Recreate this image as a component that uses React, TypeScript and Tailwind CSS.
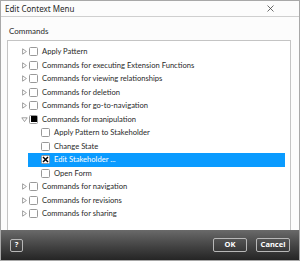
import React from 'react';

type Row = { label: string; level: 0 | 1; state?: 'collapsed' | 'expanded'; check?: 'none' | 'mixed' | 'x'; selected?: boolean };

const rows: Row[] = [
  { label: 'Apply Pattern', level: 0, state: 'collapsed' },
  { label: 'Commands for executing Extension Functions', level: 0, state: 'collapsed' },
  { label: 'Commands for viewing relationships', level: 0, state: 'collapsed' },
  { label: 'Commands for deletion', level: 0, state: 'collapsed' },
  { label: 'Commands for go-to-navigation', level: 0, state: 'collapsed' },
  { label: 'Commands for manipulation', level: 0, state: 'expanded', check: 'mixed' },
  { label: 'Apply Pattern to Stakeholder', level: 1 },
  { label: 'Change State', level: 1 },
  { label: 'Edit Stakeholder ...', level: 1, check: 'x', selected: true },
  { label: 'Open Form', level: 1 },
  { label: 'Commands for navigation', level: 0, state: 'collapsed' },
  { label: 'Commands for revisions', level: 0, state: 'collapsed' },
  { label: 'Commands for sharing', level: 0, state: 'collapsed' },
];

function Arrow({ state }: { state?: 'collapsed' | 'expanded' }) {
  if (!state) return <span className="w-[7px]" />;
  return (
    <svg width="7" height="7" viewBox="0 0 7 7" className="shrink-0">
      {state === 'collapsed' ? (
        <path d="M1.6 0.8 L5.4 3.5 L1.6 6.2 Z" fill="none" stroke="#808080" strokeWidth="0.75" />
      ) : (
        <path d="M0.8 1.8 L6.2 1.8 L3.5 5.6 Z" fill="none" stroke="#808080" strokeWidth="0.75" />
      )}
    </svg>
  );
}

function Check({ check }: { check?: 'none' | 'mixed' | 'x' }) {
  return (
    <span className="w-[9px] h-[9px] shrink-0 rounded-[1.5px] border border-[#999] bg-white flex items-center justify-center">
      {check === 'mixed' && <span className="w-[6px] h-[6px] bg-black" />}
      {check === 'x' && (
        <svg width="7" height="7" viewBox="0 0 7 7">
          <path d="M1 1 L6 6 M6 1 L1 6" stroke="#000" strokeWidth="1.5" />
        </svg>
      )}
    </span>
  );
}

export default function App() {
  return (
    <div className="w-[300px] h-[261px] bg-[#fcfcfc] border border-[#a8a8a8] flex flex-col overflow-hidden text-[#2a2a2a]" style={{ fontFamily: 'Lato, "Noto Sans", sans-serif' }}>
      {/* title bar */}
      <div className="h-[16px] shrink-0 border-b border-[#cfcfcf] flex items-center justify-between pl-[4px] pr-[25px] text-[8px]" style={{ fontFamily: '"Noto Sans", sans-serif' }}>
        <span>Edit Context Menu</span>
        <svg width="7" height="7" viewBox="0 0 7 7">
          <path d="M0.5 0.5 L6.5 6.5 M6.5 0.5 L0.5 6.5" stroke="#444" strokeWidth="0.8" />
        </svg>
      </div>

      {/* body */}
      <div className="flex-1 flex flex-col pl-[6px] pr-[8px]">
        <div className="h-[23px] flex items-end pb-[3px] pl-[2px] text-[8px]">Commands</div>
        <div className="flex-1 border border-b-0 border-[#c4c4c4] bg-white pt-[4px] pr-[5px]">
          {rows.map((r) => (
            <div
              key={r.label}
              className={`h-[13.5px] flex items-center text-[7.6px] ${r.level === 0 ? 'pl-[13px]' : 'ml-[20px] pl-[13px]'} ${r.selected ? 'bg-[#0a9bff] text-white' : ''}`}
            >
              {r.level === 0 && <Arrow state={r.state} />}
              <span className={r.level === 0 ? 'ml-[1px]' : ''}>
                <Check check={r.check} />
              </span>
              <span className="ml-[4px] whitespace-nowrap">{r.label}</span>
            </div>
          ))}
        </div>
      </div>

      {/* footer */}
      <div className="h-[30px] shrink-0 bg-gradient-to-b from-[#6a6a6a] to-[#252525] flex items-center justify-between pl-[9px] pr-[9px] text-white text-[7.5px] font-bold" style={{ fontFamily: '"Noto Sans", sans-serif' }}>
        <button className="w-[13px] h-[13px] rounded-[2px] border border-[#b8b8b8] flex items-center justify-center leading-none">?</button>
        <div className="flex gap-[9px]">
          <button className="w-[34px] h-[14px] rounded-[2px] border border-[#b8b8b8] flex items-center justify-center leading-none">OK</button>
          <button className="w-[34px] h-[14px] rounded-[2px] border border-[#b8b8b8] flex items-center justify-center leading-none">Cancel</button>
        </div>
      </div>
    </div>
  );
}
